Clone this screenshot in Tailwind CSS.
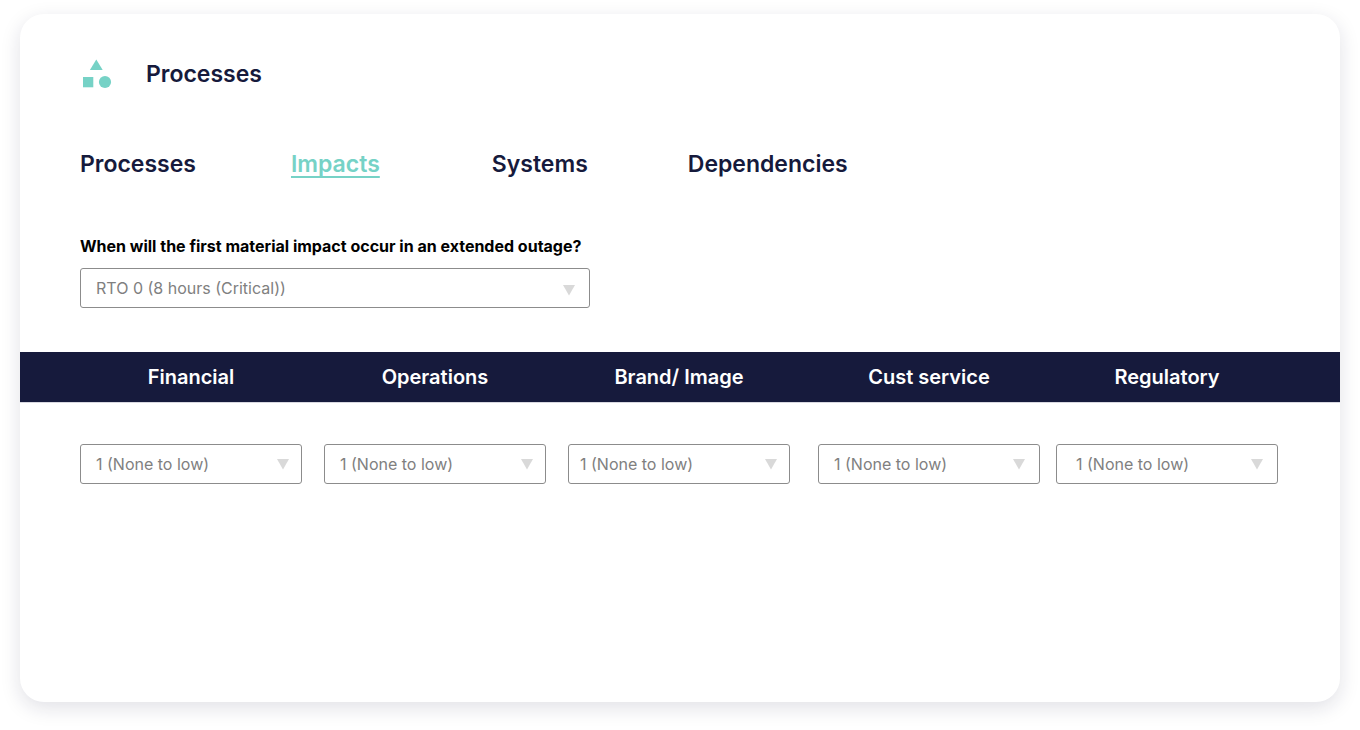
<!DOCTYPE html>
<html lang="en">
<head>
  <meta charset="UTF-8" />
  <meta name="viewport" content="width=device-width, initial-scale=1.0"/>
  <title>Processes</title>
  <script src="https://cdn.jsdelivr.net/npm/@tailwindcss/browser@4"></script>
</head>
<body class="bg-white min-h-screen flex flex-col px-5 pt-[14px] pb-7 font-['Inter',sans-serif] text-[#161a3c]">
  <main class="flex-1 bg-white rounded-3xl shadow-[0_6px_20px_rgba(22,26,60,0.13)]">
    <header class="flex items-center gap-8 px-[60px] pt-11">
      <svg class="w-[34px] h-8" viewBox="0 0 34 32" fill="#76d2c6" aria-hidden="true">
        <path d="M16.3 1.5 22.7 12H9.9z" />
        <path d="M3 19h10.3v10.3H3z" />
        <circle cx="25" cy="24" r="6.1" />
      </svg>
      <h1 class="text-[23px] leading-8 font-semibold">Processes</h1>
    </header>

    <nav class="flex px-[60px] pt-[58px] text-[23px] leading-8 font-semibold">
      <a href="#processes" class="mr-[95px]">Processes</a>
      <a href="#impacts" class="mr-[112px] text-[#76d2c6] underline decoration-2 underline-offset-4 [text-decoration-skip-ink:none]" aria-current="page">Impacts</a>
      <a href="#systems" class="mr-[100px]">Systems</a>
      <a href="#dependencies">Dependencies</a>
    </nav>

    <form>
      <div class="px-[60px] pt-[54px] pb-11">
        <label for="rto" class="block mb-[10px] text-base leading-6 font-bold text-black">When will the first material impact occur in an extended outage?</label>
        <div class="relative max-w-[510px]">
          <select id="rto" class="block w-full h-10 pl-[15px] pr-10 appearance-none bg-white border border-[#8c8c8c] rounded-[3px] text-base text-[#808080]">
            <option>RTO 0 (8 hours (Critical))</option>
          </select>
          <svg class="absolute right-[15px] top-[17px] w-3 h-[11px] pointer-events-none" viewBox="0 0 12 11" fill="#d9d9d9"><path d="M0 0h12L6 10.5z" /></svg>
        </div>
      </div>

      <table class="w-full table-fixed">
        <colgroup>
          <col class="w-[304px]" />
          <col class="w-[244px]" />
          <col class="w-[250px]" />
          <col class="w-[238px]" />
          <col class="w-[284px]" />
        </colgroup>
        <thead class="bg-[#161a3c] text-white text-xl shadow-[0_1px_0_#d8d8e0]">
          <tr class="h-[50px]">
            <th id="financial" class="pl-[60px] pr-[22px] font-semibold">Financial</th>
            <th id="operations" class="pr-[22px] font-semibold">Operations</th>
            <th id="brand" class="pr-7 font-semibold">Brand/ Image</th>
            <th id="service" class="pr-4 font-semibold">Cust service</th>
            <th id="regulatory" class="pr-[62px] font-semibold">Regulatory</th>
          </tr>
        </thead>
        <tbody>
          <tr>
            <td class="pt-[42px] pl-[60px] pr-[22px]">
              <div class="relative">
                <select aria-labelledby="financial" class="block w-full h-10 pl-[15px] pr-8 appearance-none bg-white border border-[#8c8c8c] rounded-[3px] text-base text-[#808080]">
                  <option>1 (None to low)</option>
                </select>
                <svg class="absolute right-[13px] top-[15px] w-3 h-[11px] pointer-events-none" viewBox="0 0 12 11" fill="#d9d9d9"><path d="M0 0h12L6 10.5z" /></svg>
              </div>
            </td>
            <td class="pt-[42px] pr-[22px]">
              <div class="relative">
                <select aria-labelledby="operations" class="block w-full h-10 pl-[15px] pr-8 appearance-none bg-white border border-[#8c8c8c] rounded-[3px] text-base text-[#808080]">
                  <option>1 (None to low)</option>
                </select>
                <svg class="absolute right-[13px] top-[15px] w-3 h-[11px] pointer-events-none" viewBox="0 0 12 11" fill="#d9d9d9"><path d="M0 0h12L6 10.5z" /></svg>
              </div>
            </td>
            <td class="pt-[42px] pr-7">
              <div class="relative">
                <select aria-labelledby="brand" class="block w-full h-10 pl-[11px] pr-8 appearance-none bg-white border border-[#8c8c8c] rounded-[3px] text-base text-[#808080]">
                  <option>1 (None to low)</option>
                </select>
                <svg class="absolute right-[13px] top-[15px] w-3 h-[11px] pointer-events-none" viewBox="0 0 12 11" fill="#d9d9d9"><path d="M0 0h12L6 10.5z" /></svg>
              </div>
            </td>
            <td class="pt-[42px] pr-4">
              <div class="relative">
                <select aria-labelledby="service" class="block w-full h-10 pl-[15px] pr-8 appearance-none bg-white border border-[#8c8c8c] rounded-[3px] text-base text-[#808080]">
                  <option>1 (None to low)</option>
                </select>
                <svg class="absolute right-[15px] top-[15px] w-3 h-[11px] pointer-events-none" viewBox="0 0 12 11" fill="#d9d9d9"><path d="M0 0h12L6 10.5z" /></svg>
              </div>
            </td>
            <td class="pt-[42px] pr-[62px]">
              <div class="relative">
                <select aria-labelledby="regulatory" class="block w-full h-10 pl-[19px] pr-8 appearance-none bg-white border border-[#8c8c8c] rounded-[3px] text-base text-[#808080]">
                  <option>1 (None to low)</option>
                </select>
                <svg class="absolute right-[15px] top-[15px] w-3 h-[11px] pointer-events-none" viewBox="0 0 12 11" fill="#d9d9d9"><path d="M0 0h12L6 10.5z" /></svg>
              </div>
            </td>
          </tr>
        </tbody>
      </table>
    </form>
  </main>
</body>
</html>
